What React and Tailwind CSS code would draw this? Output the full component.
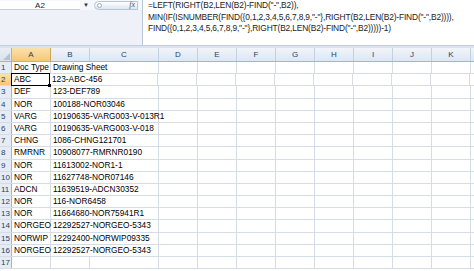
import React from 'react';

const rows = [
  ['Doc Type', 'Drawing Sheet'],
  ['ABC', '123-ABC-456'],
  ['DEF', '123-DEF789'],
  ['NOR', '100188-NOR03046'],
  ['VARG', '10190635-VARG003-V-013R1'],
  ['VARG', '10190635-VARG003-V-018'],
  ['CHNG', '1086-CHNG121701'],
  ['RMRNR', '10908077-RMRNR0190'],
  ['NOR', '11613002-NOR1-1'],
  ['NOR', '11627748-NOR07146'],
  ['ADCN', '11639519-ADCN30352'],
  ['NOR', '116-NOR6458'],
  ['NOR', '11664680-NOR75941R1'],
  ['NORGEO', '12292527-NORGEO-5343'],
  ['NORWIP', '12292400-NORWIP09335'],
  ['NORGEO', '12292527-NORGEO-5343'],
  ['', ''],
];

const cols = ['D', 'E', 'F', 'G', 'H', 'I', 'J', 'K'];

const App = () => {
  return (
    <div className="w-[474px] h-[271px] overflow-hidden bg-white font-['Liberation_Sans',Arial,sans-serif] text-black">
      {/* Name box + formula bar */}
      <div className="flex h-[45px]">
        <div className="w-[143px] bg-[#eef2f8] border-r border-[#b9c6d8]">
          <div className="flex items-center h-[10px] bg-[#f4f7fb]">
            <div className="w-[80px] h-[9px] bg-white border-b border-[#c5d0de] text-center text-[8px] leading-[9px] text-[#222]">
              A2
            </div>
            <span className="ml-[3px] text-[6px] leading-none text-[#333]">▼</span>
            <div className="ml-[5px] w-[44px] h-[9px] rounded-l-full border border-[#b8c4d4] bg-gradient-to-b from-white to-[#dfe6f0] flex items-center">
              <div className="ml-[2px] w-[5px] h-[5px] rounded-full border border-[#9aa9bd] bg-white" />
              <span className="ml-auto mr-[2px] text-[8px] italic leading-none text-[#555] font-['Liberation_Serif',serif]">fx</span>
            </div>
          </div>
        </div>
        <div className="flex-1 pl-[5px] text-[8.4px] leading-[11.5px] text-[#222] tracking-[-0.15px] whitespace-nowrap">
          <div>=LEFT(RIGHT(B2,LEN(B2)-FIND("-",B2)),</div>
          <div>MIN(IF(ISNUMBER(FIND({'{'}0,1,2,3,4,5,6,7,8,9,"-"{'}'},RIGHT(B2,LEN(B2)-FIND("-",B2)))),</div>
          <div>FIND({'{'}0,1,2,3,4,5,6,7,8,9,"-"{'}'},RIGHT(B2,LEN(B2)-FIND("-",B2)))))-1)</div>
        </div>
      </div>
      <div className="h-[3px] bg-[#dae3ee] border-t border-[#c2cedd]" />

      {/* Column headers */}
      <div className="flex h-[14px] text-[8px] text-[#2a3f5e] border-b border-[#9eb6ce]">
        <div className="w-[12px] shrink-0 bg-gradient-to-b from-[#e9eef5] to-[#d9e2ee] border-r border-[#9eb6ce] relative">
          <div className="absolute right-[1px] bottom-[1px] w-0 h-0 border-l-[7px] border-l-transparent border-b-[7px] border-b-[#b4c2d5]" />
        </div>
        <div className="w-[39px] shrink-0 flex items-center justify-center bg-gradient-to-b from-[#fae1ac] to-[#f5c877] border-r border-[#c9a55b]">A</div>
        <div className="w-[39px] shrink-0 flex items-center justify-center bg-gradient-to-b from-[#f1f5fa] to-[#dee6f1] border-r border-[#c3d0e0]">B</div>
        <div className="w-[69px] shrink-0 flex items-center justify-center bg-gradient-to-b from-[#f1f5fa] to-[#dee6f1] border-r border-[#c3d0e0]">C</div>
        {cols.map((c) => (
          <div key={c} className="w-[39px] shrink-0 flex items-center justify-center bg-gradient-to-b from-[#f1f5fa] to-[#dee6f1] border-r border-[#c3d0e0]">{c}</div>
        ))}
        <div className="flex-1 bg-gradient-to-b from-[#f1f5fa] to-[#dee6f1]" />
      </div>

      {/* Rows */}
      {rows.map((r, i) => {
        const sel = i === 1;
        return (
          <div key={i} className="flex h-[12.2px] text-[8.3px] leading-[11px] border-b border-[#d6dce6]">
            <div
              className={
                sel
                  ? 'w-[12px] shrink-0 pl-[1px] text-[8px] text-[#2a3f5e] bg-gradient-to-b from-[#fae1ac] to-[#f5c877] border-r border-[#c9a55b]'
                  : 'w-[12px] shrink-0 pl-[1px] text-[8px] text-[#2a3f5e] bg-[#e6ecf5] border-r border-[#9eb6ce]'
              }
            >
              {i + 1}
            </div>
            <div
              className={
                sel
                  ? 'w-[39px] shrink-0 pl-[2px] -mt-[1px] h-[13px] border-[1.5px] border-black relative -ml-[1px] whitespace-nowrap'
                  : 'w-[39px] shrink-0 pl-[2px] border-r border-[#d6dce6] whitespace-nowrap'
              }
            >
              {r[0]}
              {sel && <div className="absolute -right-[2px] -bottom-[2px] w-[3px] h-[3px] bg-black" />}
            </div>
            {i < 16 ? (
              <div className="w-[108px] shrink-0 pl-[2px] border-r border-[#d6dce6] whitespace-nowrap overflow-visible">{r[1]}</div>
            ) : (
              <>
                <div className="w-[39px] shrink-0 border-r border-[#d6dce6]" />
                <div className="w-[69px] shrink-0 border-r border-[#d6dce6]" />
              </>
            )}
            {cols.map((c) => (
              <div key={c} className="w-[39px] shrink-0 border-r border-[#d6dce6]" />
            ))}
            <div className="flex-1" />
          </div>
        );
      })}
    </div>
  );
};

export default App;
